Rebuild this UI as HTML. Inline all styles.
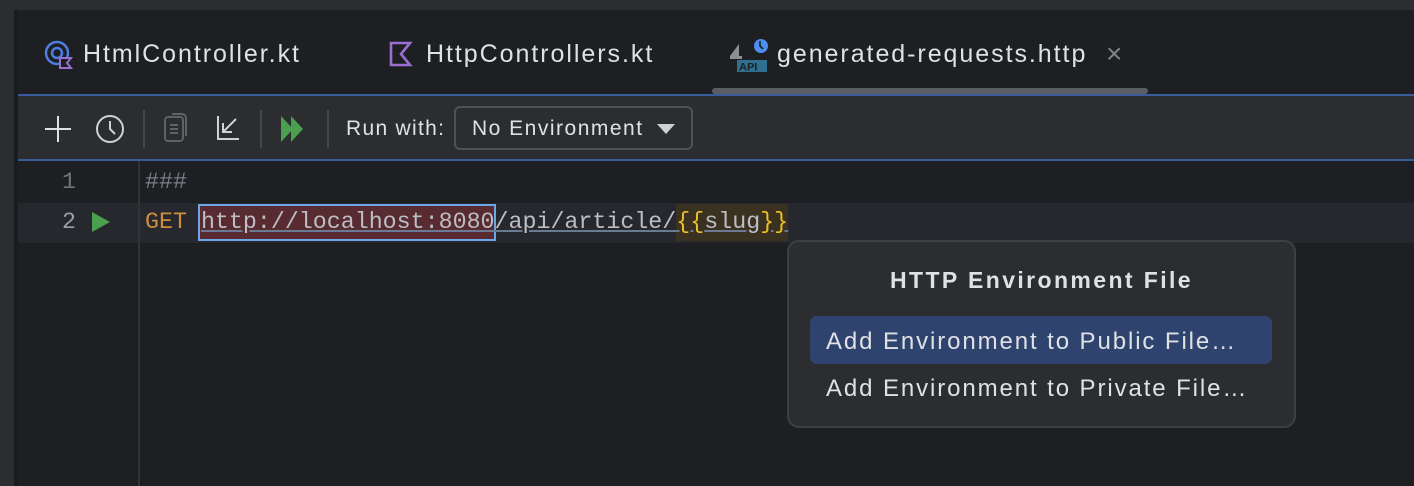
<!DOCTYPE html>
<html><head><meta charset="utf-8"><style>
*{margin:0;padding:0;box-sizing:border-box}
body{width:1414px;height:486px;overflow:hidden;background:#1e1f22;position:relative;font-family:"Liberation Sans",sans-serif;color:#dfe1e5}
.a{position:absolute}
.tab{position:absolute;top:40px;font-size:25px;color:#dfe1e5;white-space:nowrap;letter-spacing:1.95px}
.mono{font-family:"Liberation Mono",monospace;font-size:23.3px}
</style></head><body>
<div class="a" style="left:0;top:0;width:1414px;height:10px;background:#2b2d30"></div>
<div class="a" style="left:0;top:10px;width:14px;height:476px;background:#2b2d30"></div>
<div class="a" style="left:14px;top:10px;width:4px;height:476px;background:#1b1c1f"></div>
<!-- tabs -->
<svg class="a" style="left:44px;top:40px" width="32" height="32" viewBox="0 0 32 32"><circle cx="13" cy="13" r="11" fill="none" stroke="#4d7ee0" stroke-width="2.5"/><circle cx="13" cy="13" r="5" fill="none" stroke="#4d7ee0" stroke-width="2.5"/><path d="M16 18h11l-4 5 4 5H16z" fill="#1e1f22" stroke="#9a6fd0" stroke-width="2"/></svg>
<div class="tab" style="left:83px">HtmlController.kt</div>
<svg class="a" style="left:388px;top:40px" width="26" height="28" viewBox="0 0 26 28"><path d="M3 3h19l-9 11 9 11H3z" fill="none" stroke="#9a6fd0" stroke-width="2.6"/></svg>
<div class="tab" style="left:426px">HttpControllers.kt</div>
<svg class="a" style="left:727px;top:38px" width="44" height="34" viewBox="0 0 44 34"><path d="M12 18V6L3 18z" fill="#8c8f94"/><rect x="3" y="18" width="12" height="3" fill="#8c8f94"/><circle cx="34" cy="8" r="7" fill="#4d8ef0"/><path d="M33 3v5l3 3" stroke="#1e1f22" stroke-width="1.6" fill="none"/><rect x="10" y="22" width="30" height="12" fill="#2f6f8f"/><text x="12" y="32.5" font-family="Liberation Sans" font-weight="bold" font-size="11" fill="#1e1f22">API</text></svg>
<div class="tab" style="left:777px">generated-requests.http</div>
<div class="a" style="left:1106px;top:38px;font-size:28px;color:#808389">×</div>
<div class="a" style="left:712px;top:88px;width:436px;height:6px;border-radius:3px;background:#5a5d63"></div>
<!-- toolbar -->
<div class="a" style="left:18px;top:94px;width:1396px;height:67px;background:#2b2d30;border-top:2px solid #3a5a9e;border-bottom:2px solid #3a5a9e"></div>
<svg class="a" style="left:40px;top:110px" width="300" height="40" viewBox="0 0 300 40">
<path d="M18 6v26M5 19h26" stroke="#dfe1e5" stroke-width="2"/>
<circle cx="70" cy="19" r="13" fill="none" stroke="#cfd1d5" stroke-width="2"/><path d="M70 11v8l5 5" stroke="#cfd1d5" stroke-width="2" fill="none"/>
<path d="M104 -2v40" stroke="#45474c" stroke-width="2"/>
<rect x="125" y="7" width="18" height="24" rx="3" fill="none" stroke="#5e6166" stroke-width="2"/><path d="M132 4h10a4 4 0 0 1 4 4v18" stroke="#5e6166" stroke-width="2" fill="none"/><path d="M130 15h8M130 19h8M130 23h8" stroke="#5e6166" stroke-width="2"/>
<path d="M178 6v23h21M196 9l-13 13M183 13v9h9" stroke="#cfd1d5" stroke-width="2" fill="none"/>
<path d="M221 -2v40" stroke="#45474c" stroke-width="2"/>
<path d="M241 6l12 13-12 13z" fill="#4aa04f"/><path d="M251 6l12 13-12 13z" fill="#4aa04f"/>
<path d="M288 -2v40" stroke="#45474c" stroke-width="2"/>
</svg>
<div class="a" style="left:346px;top:117px;font-size:21px;color:#dfe1e5;letter-spacing:1.3px">Run with:</div>
<div class="a" style="left:454px;top:106px;width:239px;height:44px;border:2px solid #4e5157;border-radius:6px"></div>
<div class="a" style="left:472px;top:117px;font-size:21px;color:#dfe1e5;letter-spacing:1.5px">No Environment</div>
<svg class="a" style="left:655px;top:122px" width="22" height="14"><path d="M2 2h18l-9 10z" fill="#cfd1d5"/></svg>
<!-- editor -->
<div class="a" style="left:18px;top:203px;width:1396px;height:40px;background:#26282e"></div>
<div class="a" style="left:138px;top:161px;width:2px;height:325px;background:#313337"></div>
<div class="a mono" style="left:62px;top:169px;color:#6f737a">1</div>
<div class="a mono" style="left:62px;top:209px;color:#9da0a8">2</div>
<svg class="a" style="left:90px;top:210px" width="22" height="24"><path d="M2 2l18 10-18 10z" fill="#4aa04f"/></svg>
<div class="a mono" style="left:145px;top:169px;color:#7a7e85">###</div>
<div class="a" style="left:198px;top:204px;width:298px;height:37px;background:#582b30;border:2px solid #6aa6e8"></div>
<div class="a" style="left:676px;top:204px;width:112px;height:37px;background:#3b3120"></div>
<div class="a mono" style="left:145px;top:209px;white-space:pre;color:#bcbec4"><span style="color:#cf8e3d">GET</span> <span style="text-decoration:underline;text-decoration-color:#6a7a93">http://localhost:8080/api/article/<span style="color:#e8c028">{{</span>slug<span style="color:#e8c028">}}</span></span></div>
<!-- popup -->
<div class="a" style="left:787px;top:240px;width:509px;height:188px;background:#2b2d30;border:2px solid #3c3f44;border-radius:12px"></div>
<div class="a" style="left:787px;top:267px;width:509px;text-align:center;font-size:23px;font-weight:bold;color:#dfe1e5;letter-spacing:2.4px">HTTP Environment File</div>
<div class="a" style="left:810px;top:316px;width:462px;height:48px;background:#2e436e;border-radius:7px"></div>
<div class="a" style="left:826px;top:328px;font-size:24px;color:#dfe1e5;letter-spacing:1.9px">Add Environment to Public File…</div>
<div class="a" style="left:826px;top:375px;font-size:24px;color:#dfe1e5;letter-spacing:1.9px">Add Environment to Private File…</div>
</body></html>
